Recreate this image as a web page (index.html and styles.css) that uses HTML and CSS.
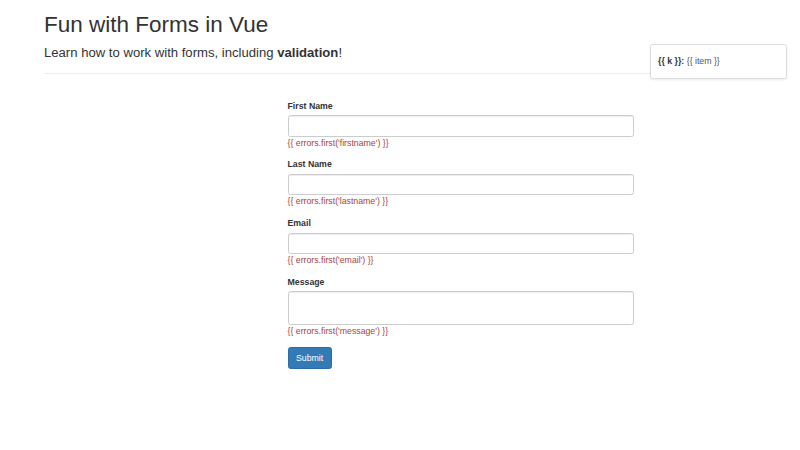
FILE: index.html
```html
<!DOCTYPE html>
<html lang="en">
<head>
<meta charset="utf-8">
<title>Fun with Forms in Vue</title>
<link rel="stylesheet" href="styles.css">
</head>
<body>
<div class="page">
  <div class="main">
    <h1 class="title">Fun with Forms in Vue</h1>
    <p class="lead">Learn how to work with forms, including <strong>validation</strong>!</p>
    <hr class="rule">
    <form class="form">
      <div class="group">
        <label class="label">First Name</label>
        <input class="control" type="text">
        <span class="error">{{ errors.first('firstname') }}</span>
      </div>
      <div class="group">
        <label class="label">Last Name</label>
        <input class="control" type="text">
        <span class="error">{{ errors.first('lastname') }}</span>
      </div>
      <div class="group">
        <label class="label">Email</label>
        <input class="control" type="text">
        <span class="error">{{ errors.first('email') }}</span>
      </div>
      <div class="group">
        <label class="label">Message</label>
        <textarea class="control area"></textarea>
        <span class="error">{{ errors.first('message') }}</span>
      </div>
      <button class="btn" type="button">Submit</button>
    </form>
  </div>
  <aside class="panel">
    <div class="panel-body"><strong>{{ k }}:</strong> <span class="item">{{ item }}</span></div>
  </aside>
</div>
</body>
</html>
```
FILE: styles.css
```css
* { box-sizing: border-box; }
html, body { margin: 0; padding: 0; background: #fff; }
body {
  font-family: "Liberation Sans", Arial, Helvetica, sans-serif;
  font-size: 8.75px;
  line-height: 1.42857;
  color: #333;
}
.page {
  display: flex;
  align-items: flex-start;
}
.main {
  margin-left: 44px;
  width: 606px;
}
.title {
  margin: 12.5px 0 6.25px;
  font-size: 22.5px;
  font-weight: 500;
  line-height: 1.1;
}
.lead {
  margin: 0 0 11px;
  font-size: 13.125px;
  font-weight: 300;
  line-height: 1.42857;
}
.lead strong { font-weight: 700; }
.rule {
  margin: 0;
  border: 0;
  border-top: 1px solid #eee;
  height: 0;
}
.form {
  margin: 25.5px 0 0 243.5px;
  width: 346.5px;
}
.group {
  margin-bottom: 9.4px;
}
.label {
  display: block;
  margin-bottom: 3.1px;
  font-weight: 700;
}
.control {
  display: block;
  width: 100%;
  height: 21.25px;
  padding: 3.75px 7.5px;
  font: inherit;
  color: #555;
  background: #fff;
  border: 1px solid #ccc;
  border-radius: 2.5px;
  box-shadow: inset 0 1px 1px rgba(0,0,0,.075);
  margin: 0;
}
.area {
  height: 33.75px;
  resize: none;
}
.error {
  display: block;
  color: #a94442;
}
.btn {
  display: inline-block;
  padding: 3.75px 7.5px;
  font: inherit;
  line-height: 1.42857;
  color: #fff;
  background: #337ab7;
  border: 1px solid #2e6da4;
  border-radius: 2.5px;
  cursor: pointer;
}
.panel {
  margin-top: 44px;
  width: 137px;
  background: #fff;
  border: 1px solid #ddd;
  border-radius: 2.5px;
  box-shadow: 0 1px 2px rgba(0,0,0,.08);
}
.panel-body {
  padding: 10px 7px;
  line-height: 13px;
}
.item { color: #555; }
```
